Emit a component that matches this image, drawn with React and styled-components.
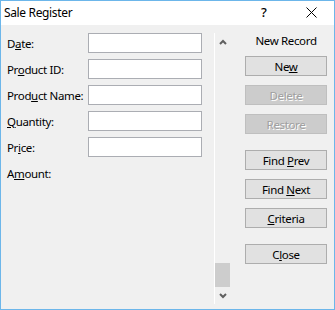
import React from 'react';
import styled, { createGlobalStyle } from 'styled-components';

const GlobalStyle = createGlobalStyle`
    html, body {
        margin: 0;
        padding: 0;
        background: #fff;
    }
    body {
        font-family: "Noto Sans", "Open Sans", sans-serif;
        font-size: 11.5px;
        letter-spacing: -0.35px;
        color: #000;
    }
`;

const fields = [
    { before: 'D', key: 'a', after: 'te:' },
    { before: 'Pr', key: 'o', after: 'duct ID:' },
    { before: 'Prod', key: 'u', after: 'ct Name:' },
    { before: '', key: 'Q', after: 'uantity:' },
    { before: 'Pr', key: 'i', after: 'ce:' },
];

const buttons = [
    { before: 'Ne', key: 'w', after: '' },
    { before: '', key: 'D', after: 'elete', disabled: true },
    { before: '', key: 'R', after: 'estore', disabled: true },
    { before: 'Find ', key: 'P', after: 'rev', group: true },
    { before: 'Find ', key: 'N', after: 'ext' },
    { before: '', key: 'C', after: 'riteria' },
    { before: 'C', key: 'l', after: 'ose', group: true },
];

const Chevron = ({ up }) => (
    <svg width="8" height="6" viewBox="0 0 8 6">
        <polyline
            points={up ? '1,5 4,2 7,5' : '1,1 4,4 7,1'}
            fill="none"
            stroke="#606060"
            strokeWidth="2"
        />
    </svg>
);

const App = () => {
    return (
        <Window>
            <GlobalStyle />
            <TitleBar>
                <Title>Sale Register</Title>
                <Help>?</Help>
                <CloseIcon>
                    <svg width="11" height="11" viewBox="0 0 11 11">
                        <line x1="0.5" y1="0.5" x2="10.5" y2="10.5" stroke="#000" strokeWidth="1" />
                        <line x1="10.5" y1="0.5" x2="0.5" y2="10.5" stroke="#000" strokeWidth="1" />
                    </svg>
                </CloseIcon>
            </TitleBar>
            <Body>
                <Fields>
                    {fields.map((f, i) => (
                        <Row key={i}>
                            <Label>{f.before}<u>{f.key}</u>{f.after}</Label>
                            <Input />
                        </Row>
                    ))}
                    <Row>
                        <Label>A<u>m</u>ount:</Label>
                    </Row>
                </Fields>
                <Scrollbar>
                    <Arrow><Chevron up /></Arrow>
                    <Track>
                        <Thumb />
                    </Track>
                    <Arrow><Chevron /></Arrow>
                </Scrollbar>
                <Actions>
                    <RecordLabel>New Record</RecordLabel>
                    <ButtonList>
                        {buttons.map((b, i) => (
                            <Button key={i} disabled={b.disabled} $group={b.group}>
                                <span>{b.before}<u>{b.key}</u>{b.after}</span>
                            </Button>
                        ))}
                    </ButtonList>
                </Actions>
            </Body>
        </Window>
    );
};

const Window = styled.div`
    width: 335px;
    height: 310px;
    box-sizing: border-box;
    border: 1px solid #6cb6ea;
    display: flex;
    flex-direction: column;
    background: #f0f0f0;
    overflow: hidden;
`;

const TitleBar = styled.div`
    height: 24px;
    flex: none;
    background: #fff;
    display: flex;
    align-items: center;
    padding-left: 3px;
`;

const Title = styled.div`
    flex: 1;
    font-size: 12px;
    margin-top: -1px;
`;

const Help = styled.div`
    width: 12px;
    font-size: 13px;
    font-weight: 500;
    margin-right: 33px;
    margin-top: -2px;
`;

const CloseIcon = styled.div`
    display: flex;
    margin-right: 17px;
    margin-top: -1px;
`;

const Body = styled.div`
    flex: 1;
    display: flex;
    min-height: 0;
`;

const Fields = styled.div`
    width: 213px;
    flex: none;
    padding: 8px 0 0 6px;
    box-sizing: border-box;
    display: flex;
    flex-direction: column;
    gap: 6px;
`;

const Row = styled.div`
    display: flex;
    align-items: center;
    height: 20px;
`;

const Label = styled.div`
    width: 81px;
    flex: none;
    white-space: nowrap;
`;

const Input = styled.div`
    width: 114px;
    height: 20px;
    box-sizing: border-box;
    border: 1px solid #abadb3;
    background: #fff;
`;

const Scrollbar = styled.div`
    width: 16px;
    flex: none;
    box-sizing: border-box;
    margin: 8px 0 5px;
    border-left: 1px solid #fff;
    display: flex;
    flex-direction: column;
`;

const Arrow = styled.div`
    height: 17px;
    flex: none;
    display: flex;
    align-items: center;
    justify-content: center;
`;

const Track = styled.div`
    flex: 1;
    display: flex;
    flex-direction: column;
    justify-content: flex-end;
`;

const Thumb = styled.div`
    height: 24px;
    background: #cdcdcd;
`;

const Actions = styled.div`
    flex: 1;
    display: flex;
    flex-direction: column;
    padding: 7px 0 0 15px;
`;

const RecordLabel = styled.div`
    width: 82px;
    text-align: center;
    height: 18px;
    line-height: 18px;
    margin-bottom: 6px;
`;

const ButtonList = styled.div`
    display: flex;
    flex-direction: column;
    gap: 9px;
`;

const Button = styled.div`
    width: 82px;
    height: 20px;
    box-sizing: border-box;
    border: 1px solid ${p => (p.disabled ? '#bfbfbf' : '#adadad')};
    background: ${p => (p.disabled ? '#cccccc' : '#e1e1e1')};
    color: ${p => (p.disabled ? '#a0a0a0' : '#000')};
    text-shadow: ${p => (p.disabled ? '1px 1px 0 #fff' : 'none')};
    display: flex;
    align-items: center;
    justify-content: center;
    margin-top: ${p => (p.$group ? '7px' : '0')};

    u {
        text-decoration: ${p => (p.disabled ? 'none' : 'underline')};
    }
`;

export default App;
